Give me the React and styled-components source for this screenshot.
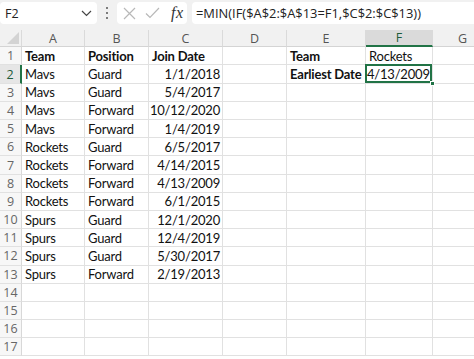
import React from "react";
import styled, { createGlobalStyle, css } from "styled-components";

const Global = createGlobalStyle`
  html, body { margin: 0; padding: 0; background: #ffffff; }
  body { width: 474px; height: 359px; overflow: hidden; }
  #root { width: 474px; height: 359px; overflow: hidden; }
`;

const UI_FONT = `"Open Sans", "Noto Sans", "Liberation Sans", sans-serif`;
const CELL_FONT = `Lato, "Open Sans", "Liberation Sans", sans-serif`;
const GREEN = "#217346";

const Page = styled.div`
  width: 474px;
  height: 359px;
  overflow: hidden;
  background: #ffffff;
  display: flex;
  flex-direction: column;
`;

const FormulaBar = styled.div`
  height: 30px;
  flex: none;
  background: #f1f1f1;
  display: flex;
  align-items: flex-start;
  padding-top: 2px;
  box-sizing: border-box;
`;

const Box = styled.div`
  height: 22px;
  background: #ffffff;
  border-radius: 4px;
  box-sizing: border-box;
  display: flex;
  align-items: center;
  flex: none;
`;

const NameBox = styled(Box)`
  width: 97px;
  padding: 0 5px 0 5px;
  justify-content: space-between;
  font-family: ${UI_FONT};
  font-size: 12.5px;
  color: #222;
`;

const Kebab = styled.div`
  width: 20px;
  height: 22px;
  display: flex;
  flex-direction: column;
  align-items: center;
  justify-content: center;
  gap: 2.5px;
  flex: none;
  & > i {
    width: 2.2px;
    height: 2.2px;
    border-radius: 50%;
    background: #555;
  }
`;

const ActionBox = styled(Box)`
  width: 70px;
  padding: 0 0 0 6px;
  gap: 9px;
`;

const Fx = styled.span`
  font-family: "Liberation Serif", "DejaVu Serif", serif;
  font-style: italic;
  font-size: 16px;
  color: #333;
  letter-spacing: 0.5px;
  margin-left: 2px;
`;

const FormulaInput = styled(Box)`
  flex: 1;
  margin-left: 5px;
  padding-left: 4px;
  font-family: ${UI_FONT};
  font-size: 12.9px;
  color: #222;
  white-space: nowrap;
  border-radius: 4px 0 0 4px;
`;

const Sheet = styled.div`
  display: grid;
  grid-template-columns: 22px 63px 64px 74px 64px 79px 67px 60px;
  grid-template-rows: 17.3px repeat(17, 18.2px);
  flex: none;
`;

const Corner = styled.div`
  background: #f1f1f1;
  border-right: 1px solid #dadada;
  border-bottom: 1px solid #d4d4d4;
  box-sizing: border-box;
  position: relative;
  &::after {
    content: "";
    position: absolute;
    right: 2px;
    bottom: 2px;
    width: 0;
    height: 0;
    border-left: 12px solid transparent;
    border-bottom: 12px solid #d3d3d3;
  }
`;

const ColHeader = styled.div`
  background: ${(p) => (p.$active ? "#dadada" : "#f1f1f1")};
  border-right: 1px solid #dadada;
  border-bottom: ${(p) => (p.$active ? `2px solid ${GREEN}` : "1px solid #d4d4d4")};
  box-sizing: border-box;
  display: flex;
  align-items: center;
  justify-content: center;
  font-family: ${UI_FONT};
  font-size: 12.5px;
  color: ${(p) => (p.$active ? "#1e5c3a" : "#555")};
`;

const RowHeader = styled.div`
  background: ${(p) => (p.$active ? "#e6e6e6" : "#f7f7f7")};
  border-right: ${(p) => (p.$active ? `2px solid ${GREEN}` : "1px solid #d8d8d8")};
  border-bottom: 1px solid #e1e1e1;
  box-sizing: border-box;
  display: flex;
  align-items: center;
  justify-content: center;
  font-family: ${UI_FONT};
  font-size: 12.5px;
  color: ${(p) => (p.$active ? "#1e5c3a" : "#666")};
`;

const Cell = styled.div`
  border-right: 1px solid #e1e1e1;
  border-bottom: 1px solid #e1e1e1;
  box-sizing: border-box;
  display: flex;
  align-items: center;
  justify-content: ${(p) => (p.$right ? "flex-end" : "flex-start")};
  padding: 0 2px 0 3px;
  font-family: ${CELL_FONT};
  font-size: 13px;
  letter-spacing: -0.2px;
  font-weight: ${(p) => (p.$bold ? 700 : 400)};
  color: #111;
  white-space: nowrap;
  overflow: visible;
  position: relative;
  ${(p) =>
    p.$selected &&
    css`
      box-shadow: inset 0 0 0 2px ${GREEN};
      margin: -1px 0 0 -1px;
      padding: 0 1px 0 2px;
      justify-content: flex-start;
      z-index: 1;
    `}
`;

const FillHandle = styled.span`
  position: absolute;
  right: -3px;
  bottom: -3px;
  width: 5px;
  height: 5px;
  background: ${GREEN};
  border: 1px solid #fff;
  box-sizing: border-box;
`;

const Chevron = () => (
  <svg width="11" height="7" viewBox="0 0 11 7">
    <path d="M1 1 L5.5 5.5 L10 1" fill="none" stroke="#444" strokeWidth="1.2" />
  </svg>
);

const XIcon = () => (
  <svg width="13" height="13" viewBox="0 0 13 13">
    <path d="M1 1 L12 12 M12 1 L1 12" stroke="#b8b8b8" strokeWidth="1.2" fill="none" />
  </svg>
);

const CheckIcon = () => (
  <svg width="15" height="12" viewBox="0 0 15 12">
    <path d="M1 6.5 L5 10.5 L14 1" stroke="#b8b8b8" strokeWidth="1.2" fill="none" />
  </svg>
);

const data = [
  ["Team", "Position", "Join Date"],
  ["Mavs", "Guard", "1/1/2018"],
  ["Mavs", "Guard", "5/4/2017"],
  ["Mavs", "Forward", "10/12/2020"],
  ["Mavs", "Forward", "1/4/2019"],
  ["Rockets", "Guard", "6/5/2017"],
  ["Rockets", "Forward", "4/14/2015"],
  ["Rockets", "Forward", "4/13/2009"],
  ["Rockets", "Forward", "6/1/2015"],
  ["Spurs", "Guard", "12/1/2020"],
  ["Spurs", "Guard", "12/4/2019"],
  ["Spurs", "Guard", "5/30/2017"],
  ["Spurs", "Forward", "2/19/2013"],
];

const side = {
  1: ["Team", "Rockets"],
  2: ["Earliest Date", "4/13/2009"],
};

const cols = ["A", "B", "C", "D", "E", "F", "G"];

export default function App() {
  const rows = [];
  for (let r = 1; r <= 17; r++) {
    const d = data[r - 1];
    const s = side[r];
    const active = r === 2;
    rows.push(
      <React.Fragment key={r}>
        <RowHeader $active={active}>{r}</RowHeader>
        <Cell $bold={r === 1}>{d ? d[0] : ""}</Cell>
        <Cell $bold={r === 1}>{d ? d[1] : ""}</Cell>
        <Cell $bold={r === 1} $right={r !== 1}>{d ? d[2] : ""}</Cell>
        <Cell />
        <Cell $bold>{s ? s[0] : ""}</Cell>
        <Cell $selected={r === 2} $right={r === 2}>
          {s ? s[1] : ""}
          {r === 2 && <FillHandle />}
        </Cell>
        <Cell />
      </React.Fragment>
    );
  }
  return (
    <Page>
      <Global />
      <FormulaBar>
        <NameBox>
          <span>F2</span>
          <Chevron />
        </NameBox>
        <Kebab>
          <i />
          <i />
          <i />
        </Kebab>
        <ActionBox>
          <XIcon />
          <CheckIcon />
          <Fx>fx</Fx>
        </ActionBox>
        <FormulaInput>=MIN(IF($A$2:$A$13=F1,$C$2:$C$13))</FormulaInput>
      </FormulaBar>
      <Sheet>
        <Corner />
        {cols.map((c) => (
          <ColHeader key={c} $active={c === "F"}>
            {c}
          </ColHeader>
        ))}
        {rows}
      </Sheet>
    </Page>
  );
}
